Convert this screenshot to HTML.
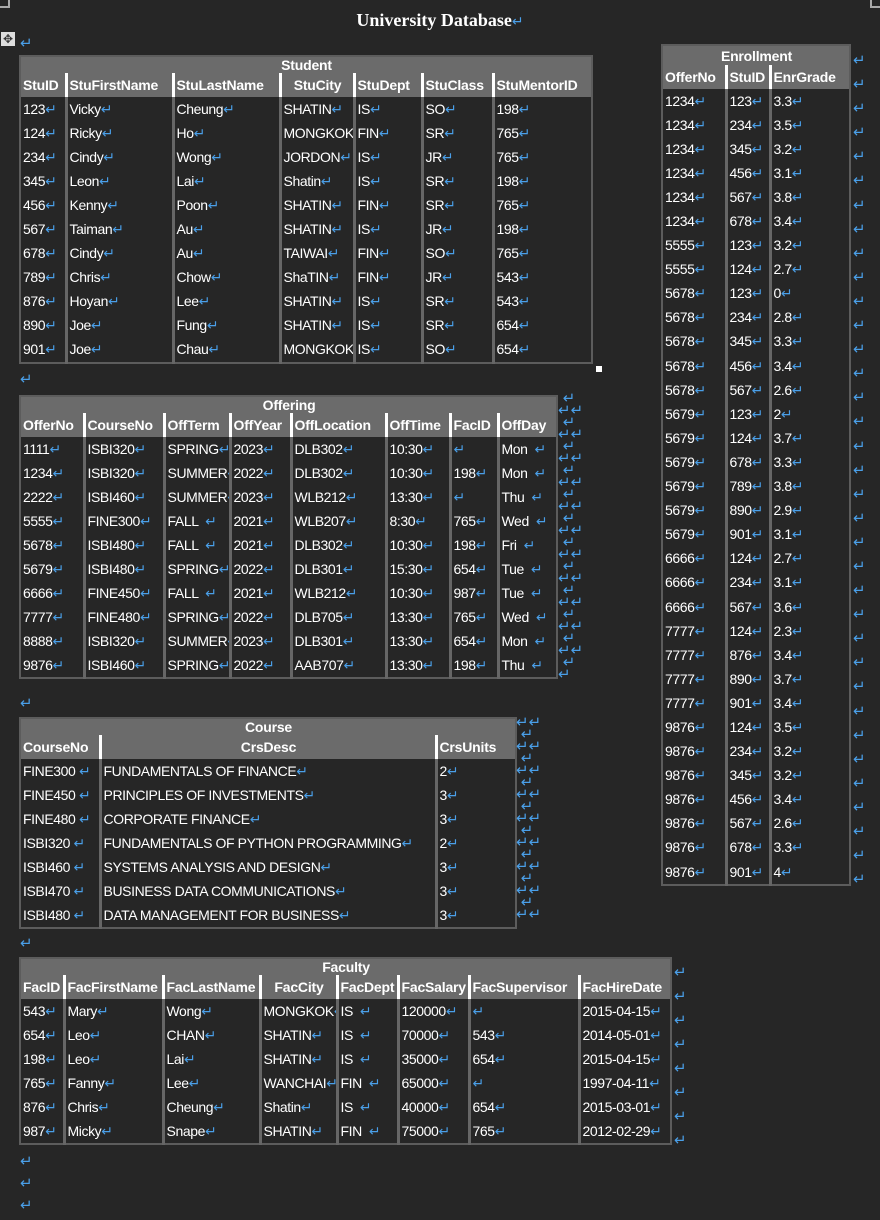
<!DOCTYPE html>
<html><head><meta charset="utf-8"><style>
html,body{margin:0;padding:0;background:#262626;width:880px;height:1220px;overflow:hidden;position:relative;font-family:"Liberation Sans","DejaVu Sans",sans-serif;color:#fff}
.title{position:absolute;left:0;width:880px;top:10px;text-align:center;font:bold 18px "Liberation Serif",serif;color:#fff}
.ar{position:absolute;color:#4a9fe8;font:15px "DejaVu Sans",sans-serif;line-height:14px}
table{position:absolute;border-collapse:collapse;table-layout:fixed;border:2px solid #5c5c5c;background:#262626}
td,th{white-space:nowrap;overflow:hidden;padding:0 1px 0 2px;text-align:left}
th{background:#6b6b6b;font:bold 14px "Liberation Sans",sans-serif;height:24px;border-left:3px solid #fff;letter-spacing:-0.2px}
th.t{height:16px;line-height:16px;text-align:center;border-left:none}
td{font:14px "Liberation Sans",sans-serif;height:24px;border-left:3px solid #666;letter-spacing:-0.4px}
td::after{content:"↵";color:#4a9fe8;font-family:"DejaVu Sans",sans-serif;font-size:14px}
tr td:first-child,tr th:first-child{border-left:none}
.stud td{height:24.1px}
.enr td{height:24.1px}
.c{text-align:center}
</style></head><body>
<div style="position:absolute;left:0;top:0;width:8px;height:6px;border-right:2px solid #aaa;border-bottom:2px solid #aaa"></div>
<div style="position:absolute;right:0;top:0;width:8px;height:6px;border-left:2px solid #aaa;border-bottom:2px solid #aaa"></div>
<div class="title">University Database<span style="color:#4a9fe8;font-weight:normal;font-size:14px">↵</span></div>
<div style="position:absolute;left:1px;top:32px;width:14px;height:14px;background:#ddd;color:#333;font-size:12px;line-height:14px;text-align:center">✥</div>
<div class="ar" style="left:20px;top:36px">↵</div>

<table class="stud" style="left:19px;top:55px;width:574px">
<colgroup><col style="width:46px"><col style="width:107px"><col style="width:107px"><col style="width:74px"><col style="width:68px"><col style="width:71px"><col style="width:99px"></colgroup>
<tr><th class="t" colspan="7">Student</th></tr>
<tr><th>StuID</th><th>StuFirstName</th><th>StuLastName</th><th class="c">StuCity</th><th>StuDept</th><th>StuClass</th><th>StuMentorID</th></tr>
<tr><td>123</td><td>Vicky</td><td>Cheung</td><td>SHATIN</td><td>IS</td><td>SO</td><td>198</td></tr>
<tr><td>124</td><td>Ricky</td><td>Ho</td><td>MONGKOK</td><td>FIN</td><td>SR</td><td>765</td></tr>
<tr><td>234</td><td>Cindy</td><td>Wong</td><td>JORDON</td><td>IS</td><td>JR</td><td>765</td></tr>
<tr><td>345</td><td>Leon</td><td>Lai</td><td>Shatin</td><td>IS</td><td>SR</td><td>198</td></tr>
<tr><td>456</td><td>Kenny</td><td>Poon</td><td>SHATIN</td><td>FIN</td><td>SR</td><td>765</td></tr>
<tr><td>567</td><td>Taiman</td><td>Au</td><td>SHATIN</td><td>IS</td><td>JR</td><td>198</td></tr>
<tr><td>678</td><td>Cindy</td><td>Au</td><td>TAIWAI</td><td>FIN</td><td>SO</td><td>765</td></tr>
<tr><td>789</td><td>Chris</td><td>Chow</td><td>ShaTIN</td><td>FIN</td><td>JR</td><td>543</td></tr>
<tr><td>876</td><td>Hoyan</td><td>Lee</td><td>SHATIN</td><td>IS</td><td>SR</td><td>543</td></tr>
<tr><td>890</td><td>Joe</td><td>Fung</td><td>SHATIN</td><td>IS</td><td>SR</td><td>654</td></tr>
<tr><td>901</td><td>Joe</td><td>Chau</td><td>MONGKOK</td><td>IS</td><td>SO</td><td>654</td></tr>
</table>
<div style="position:absolute;left:596px;top:366px;width:6px;height:6px;background:#fff"></div>
<div class="ar" style="left:20px;top:372px">↵</div>

<table style="left:19px;top:395px;width:539px">
<colgroup><col style="width:64px"><col style="width:80px"><col style="width:66px"><col style="width:61px"><col style="width:95px"><col style="width:64px"><col style="width:48px"><col style="width:59px"></colgroup>
<tr><th class="t" colspan="8">Offering</th></tr>
<tr><th>OfferNo</th><th>CourseNo</th><th>OffTerm</th><th>OffYear</th><th>OffLocation</th><th>OffTime</th><th>FacID</th><th>OffDay</th></tr>
<tr><td>1111</td><td>ISBI320</td><td>SPRING</td><td>2023</td><td>DLB302</td><td>10:30</td><td></td><td>Mon &nbsp;</td></tr>
<tr><td>1234</td><td>ISBI320</td><td>SUMMER</td><td>2022</td><td>DLB302</td><td>10:30</td><td>198</td><td>Mon &nbsp;</td></tr>
<tr><td>2222</td><td>ISBI460</td><td>SUMMER</td><td>2023</td><td>WLB212</td><td>13:30</td><td></td><td>Thu &nbsp;</td></tr>
<tr><td>5555</td><td>FINE300</td><td>FALL &nbsp;</td><td>2021</td><td>WLB207</td><td>8:30</td><td>765</td><td>Wed &nbsp;</td></tr>
<tr><td>5678</td><td>ISBI480</td><td>FALL &nbsp;</td><td>2021</td><td>DLB302</td><td>10:30</td><td>198</td><td>Fri &nbsp;</td></tr>
<tr><td>5679</td><td>ISBI480</td><td>SPRING</td><td>2022</td><td>DLB301</td><td>15:30</td><td>654</td><td>Tue &nbsp;</td></tr>
<tr><td>6666</td><td>FINE450</td><td>FALL &nbsp;</td><td>2021</td><td>WLB212</td><td>10:30</td><td>987</td><td>Tue &nbsp;</td></tr>
<tr><td>7777</td><td>FINE480</td><td>SPRING</td><td>2022</td><td>DLB705</td><td>13:30</td><td>765</td><td>Wed &nbsp;</td></tr>
<tr><td>8888</td><td>ISBI320</td><td>SUMMER</td><td>2023</td><td>DLB301</td><td>13:30</td><td>654</td><td>Mon &nbsp;</td></tr>
<tr><td>9876</td><td>ISBI460</td><td>SPRING</td><td>2022</td><td>AAB707</td><td>13:30</td><td>198</td><td>Thu &nbsp;</td></tr>
</table>
<div class="ar" style="left:558px;top:392px;line-height:12px">&nbsp;↵<br>↵↵<br>&nbsp;↵<br>↵↵<br>&nbsp;↵<br>↵↵<br>&nbsp;↵<br>↵↵<br>&nbsp;↵<br>↵↵<br>&nbsp;↵<br>↵↵<br>&nbsp;↵<br>↵↵<br>&nbsp;↵<br>↵↵<br>&nbsp;↵<br>↵↵<br>&nbsp;↵<br>↵↵<br>&nbsp;↵<br>↵↵<br>&nbsp;↵<br>↵</div>
<div class="ar" style="left:20px;top:696px">↵</div>

<table style="left:19px;top:717px;width:498px">
<colgroup><col style="width:80px"><col style="width:336px"><col style="width:80px"></colgroup>
<tr><th class="t" colspan="3">Course</th></tr>
<tr><th>CourseNo</th><th class="c">CrsDesc</th><th>CrsUnits</th></tr>
<tr><td>FINE300 </td><td>FUNDAMENTALS OF FINANCE</td><td>2</td></tr>
<tr><td>FINE450 </td><td>PRINCIPLES OF INVESTMENTS</td><td>3</td></tr>
<tr><td>FINE480 </td><td>CORPORATE FINANCE</td><td>3</td></tr>
<tr><td>ISBI320 </td><td>FUNDAMENTALS OF PYTHON PROGRAMMING</td><td>2</td></tr>
<tr><td>ISBI460 </td><td>SYSTEMS ANALYSIS AND DESIGN</td><td>3</td></tr>
<tr><td>ISBI470 </td><td>BUSINESS DATA COMMUNICATIONS</td><td>3</td></tr>
<tr><td>ISBI480 </td><td>DATA MANAGEMENT FOR BUSINESS</td><td>3</td></tr>
</table>
<div class="ar" style="left:516px;top:716px;line-height:12px">↵↵<br>&nbsp;↵<br>↵↵<br>&nbsp;↵<br>↵↵<br>&nbsp;↵<br>↵↵<br>&nbsp;↵<br>↵↵<br>&nbsp;↵<br>↵↵<br>&nbsp;↵<br>↵↵<br>&nbsp;↵<br>↵↵<br>&nbsp;↵<br>↵↵</div>
<div class="ar" style="left:20px;top:936px">↵</div>

<table style="left:19px;top:957px;width:653px">
<colgroup><col style="width:44px"><col style="width:99px"><col style="width:97px"><col style="width:77px"><col style="width:61px"><col style="width:71px"><col style="width:110px"><col style="width:92px"></colgroup>
<tr><th class="t" colspan="8">Faculty</th></tr>
<tr><th>FacID</th><th>FacFirstName</th><th>FacLastName</th><th class="c">FacCity</th><th>FacDept</th><th>FacSalary</th><th>FacSupervisor</th><th>FacHireDate</th></tr>
<tr><td>543</td><td>Mary</td><td>Wong</td><td>MONGKOK</td><td>IS &nbsp;</td><td>120000</td><td></td><td>2015-04-15</td></tr>
<tr><td>654</td><td>Leo</td><td>CHAN</td><td>SHATIN</td><td>IS &nbsp;</td><td>70000</td><td>543</td><td>2014-05-01</td></tr>
<tr><td>198</td><td>Leo</td><td>Lai</td><td>SHATIN</td><td>IS &nbsp;</td><td>35000</td><td>654</td><td>2015-04-15</td></tr>
<tr><td>765</td><td>Fanny</td><td>Lee</td><td>WANCHAI</td><td>FIN &nbsp;</td><td>65000</td><td></td><td>1997-04-11</td></tr>
<tr><td>876</td><td>Chris</td><td>Cheung</td><td>Shatin</td><td>IS &nbsp;</td><td>40000</td><td>654</td><td>2015-03-01</td></tr>
<tr><td>987</td><td>Micky</td><td>Snape</td><td>SHATIN</td><td>FIN &nbsp;</td><td>75000</td><td>765</td><td>2012-02-29</td></tr>
</table>
<div class="ar" style="left:674px;top:960px;line-height:24px">↵<br>↵<br>↵<br>↵<br>↵<br>↵<br>↵<br>↵</div>
<div class="ar" style="left:20px;top:1150px;line-height:22px">↵<br>↵<br>↵<br>↵</div>

<table class="enr" style="left:661px;top:44px;width:190px">
<colgroup><col style="width:64px"><col style="width:44px"><col style="width:80px"></colgroup>
<tr><th class="t" colspan="3" style="height:19px">Enrollment</th></tr>
<tr><th>OfferNo</th><th>StuID</th><th>EnrGrade</th></tr>
<tr><td>1234</td><td>123</td><td>3.3</td></tr>
<tr><td>1234</td><td>234</td><td>3.5</td></tr>
<tr><td>1234</td><td>345</td><td>3.2</td></tr>
<tr><td>1234</td><td>456</td><td>3.1</td></tr>
<tr><td>1234</td><td>567</td><td>3.8</td></tr>
<tr><td>1234</td><td>678</td><td>3.4</td></tr>
<tr><td>5555</td><td>123</td><td>3.2</td></tr>
<tr><td>5555</td><td>124</td><td>2.7</td></tr>
<tr><td>5678</td><td>123</td><td>0</td></tr>
<tr><td>5678</td><td>234</td><td>2.8</td></tr>
<tr><td>5678</td><td>345</td><td>3.3</td></tr>
<tr><td>5678</td><td>456</td><td>3.4</td></tr>
<tr><td>5678</td><td>567</td><td>2.6</td></tr>
<tr><td>5679</td><td>123</td><td>2</td></tr>
<tr><td>5679</td><td>124</td><td>3.7</td></tr>
<tr><td>5679</td><td>678</td><td>3.3</td></tr>
<tr><td>5679</td><td>789</td><td>3.8</td></tr>
<tr><td>5679</td><td>890</td><td>2.9</td></tr>
<tr><td>5679</td><td>901</td><td>3.1</td></tr>
<tr><td>6666</td><td>124</td><td>2.7</td></tr>
<tr><td>6666</td><td>234</td><td>3.1</td></tr>
<tr><td>6666</td><td>567</td><td>3.6</td></tr>
<tr><td>7777</td><td>124</td><td>2.3</td></tr>
<tr><td>7777</td><td>876</td><td>3.4</td></tr>
<tr><td>7777</td><td>890</td><td>3.7</td></tr>
<tr><td>7777</td><td>901</td><td>3.4</td></tr>
<tr><td>9876</td><td>124</td><td>3.5</td></tr>
<tr><td>9876</td><td>234</td><td>3.2</td></tr>
<tr><td>9876</td><td>345</td><td>3.2</td></tr>
<tr><td>9876</td><td>456</td><td>3.4</td></tr>
<tr><td>9876</td><td>567</td><td>2.6</td></tr>
<tr><td>9876</td><td>678</td><td>3.3</td></tr>
<tr><td>9876</td><td>901</td><td>4</td></tr>
</table>
<div class="ar" style="left:853px;top:48px;line-height:24.1px">↵<br>↵<br>↵<br>↵<br>↵<br>↵<br>↵<br>↵<br>↵<br>↵<br>↵<br>↵<br>↵<br>↵<br>↵<br>↵<br>↵<br>↵<br>↵<br>↵<br>↵<br>↵<br>↵<br>↵<br>↵<br>↵<br>↵<br>↵<br>↵<br>↵<br>↵<br>↵<br>↵<br>↵<br>↵</div>
</body></html>
